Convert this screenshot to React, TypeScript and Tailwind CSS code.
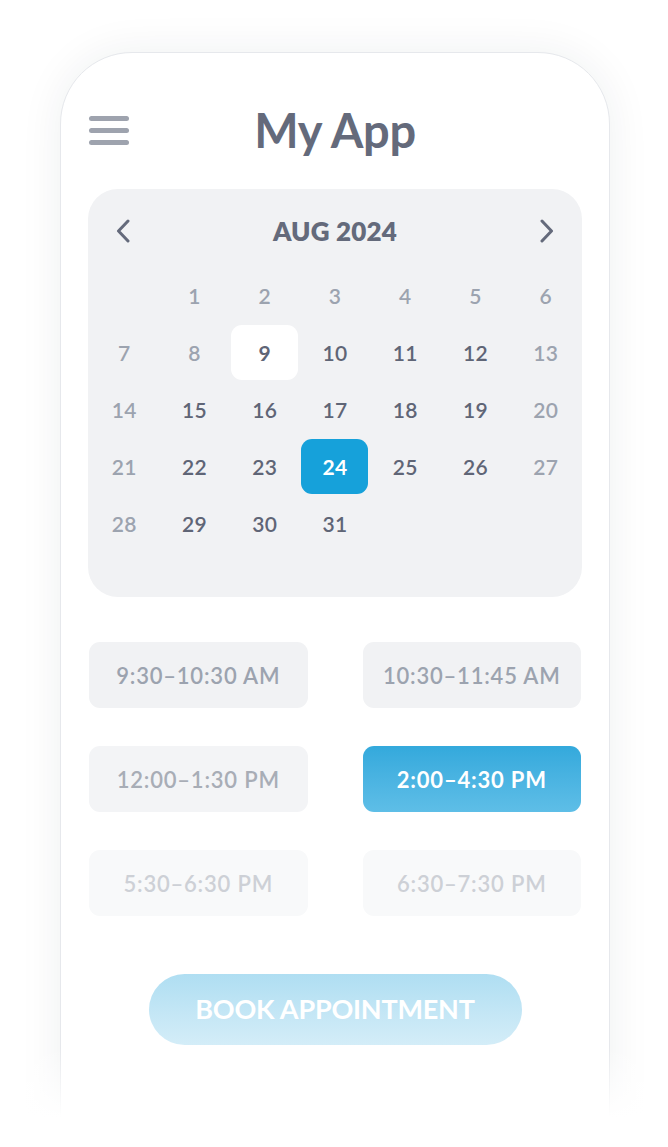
import React from "react";

const days: (number | null)[] = [
  null, 1, 2, 3, 4, 5, 6,
  7, 8, 9, 10, 11, 12, 13,
  14, 15, 16, 17, 18, 19, 20,
  21, 22, 23, 24, 25, 26, 27,
  28, 29, 30, 31, null, null, null,
];

function dayClass(d: number, idx: number) {
  const col = idx % 7;
  if (d === 24) return "bg-[#16a1da] text-white font-bold";
  if (d === 9) return "bg-white text-[#5f6576] font-bold";
  if (d <= 8 || col === 0 || col === 6) return "text-[#9ca3af] font-semibold";
  return "text-[#5f6576] font-semibold";
}

const slots = [
  { t: "9:30–10:30 AM", c: "bg-[#f1f2f4] text-[#9ca3af] font-semibold" },
  { t: "10:30–11:45 AM", c: "bg-[#f1f2f4] text-[#9ca3af] font-semibold" },
  { t: "12:00–1:30 PM", c: "bg-[#f3f4f6] text-[#a8adb6] font-semibold" },
  { t: "2:00–4:30 PM", c: "bg-linear-to-b from-[#33a9dc] to-[#5ebee7] text-white font-bold" },
  { t: "5:30–6:30 PM", c: "bg-[#f8f9fa] text-[#cdd0d6] font-semibold" },
  { t: "6:30–7:30 PM", c: "bg-[#f8f9fa] text-[#cdd0d6] font-semibold" },
];

export default function App() {
  return (
    <div
      className="relative w-[668px] h-[1147px] overflow-hidden bg-white"
      style={{ fontFamily: "Lato, 'Open Sans', sans-serif" }}
    >
      <div className="ml-[60px] mt-[52px] w-[550px] h-[1200px] rounded-t-[72px] border border-[#e6e8ec] bg-white shadow-[0_0_44px_rgba(30,40,60,0.07)] px-[27px] pt-[49px]">
        {/* header */}
        <div className="grid grid-cols-[1fr_auto_1fr] items-center h-[56px]">
          <div className="flex flex-col gap-[7px] w-[40px] ml-[1px]">
            <span className="block h-[5px] rounded-full bg-[#9ea3ae]" />
            <span className="block h-[5px] rounded-full bg-[#9ea3ae]" />
            <span className="block h-[5px] rounded-full bg-[#9ea3ae]" />
          </div>
          <h1 className="text-[47px] leading-none font-bold text-[#646a7b] tracking-[-0.3px]">My App</h1>
          <div />
        </div>

        {/* calendar */}
        <div className="mt-[31px] h-[408px] rounded-[30px] bg-[#f1f2f4] pt-[22px] px-[1px]">
          <div className="flex items-center justify-between h-[40px] px-[27px]">
            <svg width="14" height="24" viewBox="0 0 14 24" fill="none">
              <path d="M12 2 L2.5 12 L12 22" stroke="#646a7b" strokeWidth="3" strokeLinecap="round" strokeLinejoin="round" />
            </svg>
            <span className="text-[26px] font-extrabold text-[#646a7b] tracking-[0.2px]">AUG 2024</span>
            <svg width="14" height="24" viewBox="0 0 14 24" fill="none">
              <path d="M2 2 L11.5 12 L2 22" stroke="#646a7b" strokeWidth="3" strokeLinecap="round" strokeLinejoin="round" />
            </svg>
          </div>
          <div className="mt-[16px] grid grid-cols-7 auto-rows-[57px]">
            {days.map((d, i) => (
              <div key={i} className="flex items-center justify-center">
                {d !== null && (
                  <div
                    className={`flex items-center justify-center w-[67px] h-[55px] rounded-[11px] text-[21px] tracking-[0.3px] ${dayClass(d, i)}`}
                  >
                    {d}
                  </div>
                )}
              </div>
            ))}
          </div>
        </div>

        {/* slots */}
        <div className="mt-[45px] grid grid-cols-2 gap-x-[55px] gap-y-[38px] px-[1px]">
          {slots.map((s) => (
            <div
              key={s.t}
              className={`h-[66px] rounded-[11px] flex items-center justify-center text-[22px] tracking-[0.8px] ${s.c}`}
            >
              {s.t}
            </div>
          ))}
        </div>

        {/* book */}
        <div className="mt-[58px] flex justify-center">
          <button className="w-[373px] h-[71px] rounded-full bg-linear-to-b from-[#afdef2] to-[#d4edf8] text-white text-[27px] font-bold tracking-[-0.2px]">
            BOOK APPOINTMENT
          </button>
        </div>
      </div>
      <div className="absolute left-0 right-0 bottom-0 h-[100px] bg-linear-to-b from-white/0 via-white via-70% to-white" />
    </div>
  );
}
